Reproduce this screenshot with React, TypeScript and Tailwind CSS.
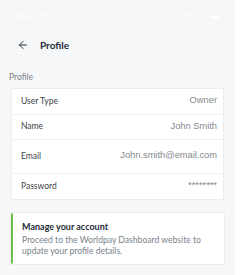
import { ArrowLeft } from "lucide-react";

const rows = [
  { label: "User Type", value: "Owner", h: "h-[26px]" },
  { label: "Name", value: "John Smith", h: "h-[25px]" },
  { label: "Email", value: "John.smith@email.com", h: "h-[34px]" },
  { label: "Password", value: "********", h: "h-[25px]" },
];

export default function App() {
  return (
    <div className="flex h-[275px] w-[246px] bg-white font-['Lato',sans-serif]">
      <div className="flex w-[235px] flex-col bg-[#f6f7f9]">
        {/* status bar */}
        <div className="flex h-[30px] items-center justify-between px-[14px] text-[8px] text-white">
          <span>14:23 ☏</span>
          <span className="tracking-[2px]">▪▪ ◠ ▬</span>
        </div>

        {/* header */}
        <div className="flex h-[30px] items-center gap-[11px] px-[17px]">
          <ArrowLeft size={12} strokeWidth={2} className="text-[#2b3640]" />
          <h1 className="text-[10px] font-bold text-[#1f2b36]">Profile</h1>
        </div>

        <p className="mt-[11px] px-[9px] text-[8.5px] text-[#7a7f85]">Profile</p>

        <div className="mx-[11px] mt-[4px] rounded-[2px] border border-[#ececee] bg-white">
          {rows.map((row, i) => (
            <div
              key={row.label}
              className={`flex items-center justify-between pl-[9px] pr-[6px] ${row.h} ${
                i < rows.length - 1 ? "border-b border-[#efeff1]" : ""
              }`}
            >
              <span className="text-[8.5px] text-[#3b4148]">{row.label}</span>
              <span className="font-['Liberation_Sans',sans-serif] text-[9.3px] text-[#85898e]">
                {row.value}
              </span>
            </div>
          ))}
        </div>

        <div className="mx-[10px] mt-[12px] flex rounded-[2px] border border-[#ececee] bg-white">
          <div className="w-[3px] rounded-l-[2px] bg-[#6cc04a]" />
          <div className="px-[9px] pb-[7px] pt-[7px]">
            <p className="text-[9px] font-bold text-[#1d2b36]">Manage your account</p>
            <p className="mt-[2px] text-[8.6px] leading-[11px] text-[#7a838c]">
              Proceed to the Worldpay Dashboard website to update your profile details.
            </p>
          </div>
        </div>
      </div>
    </div>
  );
}
